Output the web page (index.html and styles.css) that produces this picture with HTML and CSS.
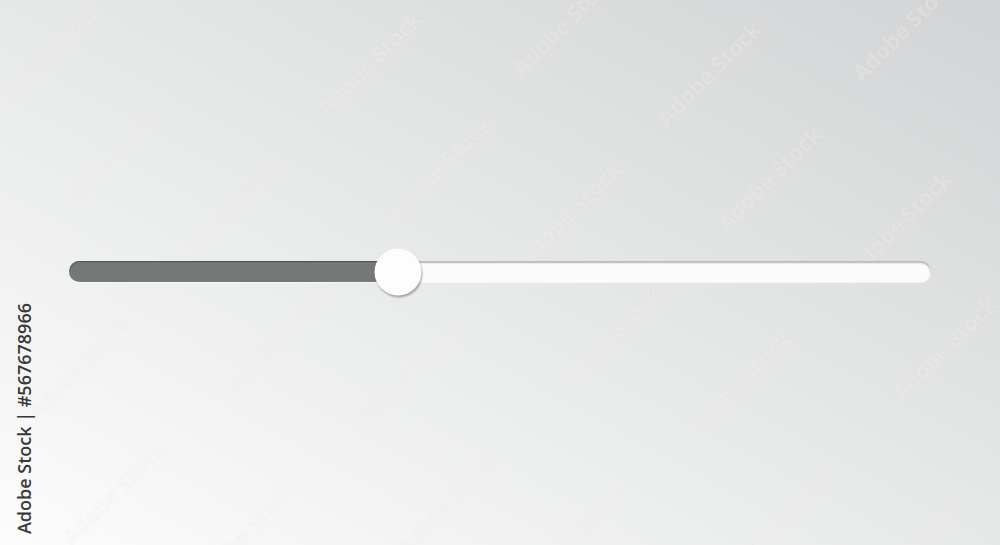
FILE: index.html
```html
<!DOCTYPE html>
<html lang="en">
<head>
    <meta charset="UTF-8">
    <meta name="viewport" content="width=device-width, initial-scale=1.0">
    <title>Slider</title>
    <link rel="stylesheet" href="styles.css">
</head>
<body>
    <div class="stage">
        <div class="watermarks">
            <span style="left:-10px;top:5px">Adobe Stock</span>
            <span style="left:50px;top:110px">Adobe Stock</span>
            <span style="left:175px;top:155px">Adobe Stock</span>
            <span style="left:310px;top:15px">Adobe Stock</span>
            <span style="left:380px;top:120px">Adobe Stock</span>
            <span style="left:510px;top:165px">Adobe Stock</span>
            <span style="left:505px;top:-25px">Adobe Stock</span>
            <span style="left:650px;top:25px">Adobe Stock</span>
            <span style="left:710px;top:130px">Adobe Stock</span>
            <span style="left:840px;top:175px">Adobe Stock</span>
            <span style="left:845px;top:-20px">Adobe Stock</span>
            <span style="left:20px;top:320px">Adobe Stock</span>
            <span style="left:220px;top:290px">Adobe Stock</span>
            <span style="left:350px;top:325px">Adobe Stock</span>
            <span style="left:550px;top:290px">Adobe Stock</span>
            <span style="left:680px;top:335px">Adobe Stock</span>
            <span style="left:885px;top:300px">Adobe Stock</span>
            <span style="left:55px;top:445px">Adobe Stock</span>
            <span style="left:185px;top:485px">Adobe Stock</span>
            <span style="left:390px;top:455px">Adobe Stock</span>
            <span style="left:515px;top:490px">Adobe Stock</span>
            <span style="left:725px;top:465px">Adobe Stock</span>
            <span style="left:855px;top:495px">Adobe Stock</span>
        </div>

        <div class="slider">
            <div class="track">
                <div class="fill" style="width:330px"></div>
                <div class="thumb" style="left:329px"></div>
            </div>
        </div>

        <div class="stock-id">Adobe Stock | #567678966</div>
    </div>
</body>
</html>
```

FILE: styles.css
```css
body {
    margin: 0;
    font-family: "Open Sans", Arial, sans-serif;
}

.stage {
    position: relative;
    width: 1000px;
    height: 545px;
    overflow: hidden;
    background: linear-gradient(to top right, #fcfcfc 0%, #e9eaea 45%, #d2d3d4 100%);
}

.watermarks span {
    position: absolute;
    font-size: 22px;
    font-weight: 700;
    color: rgba(255, 255, 255, 0.3);
    text-shadow: 0 0 2px rgba(0, 0, 0, 0.03);
    transform: rotate(-45deg);
    transform-origin: left top;
    white-space: nowrap;
    margin-top: 85px;
}

.slider {
    position: relative;
    padding: 261px 69px 0;
}

.track {
    position: relative;
    height: 21px;
    border-radius: 11px;
    background: #fbfbfb;
    box-shadow: inset 0 2px 2px rgba(0, 0, 0, 0.28), 0 1px 0 rgba(255, 255, 255, 0.6);
}

.fill {
    height: 100%;
    border-radius: 11px 0 0 11px;
    background: #757879;
    box-shadow: inset 0 1px 1px rgba(0, 0, 0, 0.35);
}

.thumb {
    position: absolute;
    top: 50%;
    width: 47px;
    height: 47px;
    border-radius: 50%;
    background: #fdfdfd;
    transform: translate(-50%, -50%);
    box-shadow: 1px 2px 2px rgba(0, 0, 0, 0.3);
}

.stock-id {
    position: absolute;
    left: 12px;
    top: 303px;
    writing-mode: vertical-rl;
    transform: rotate(180deg);
    font-size: 18px;
    font-weight: 600;
    color: #383838;
    white-space: nowrap;
}
```
